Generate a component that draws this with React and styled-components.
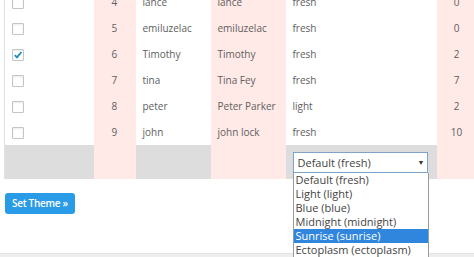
import React from 'react'
import styled, { createGlobalStyle } from 'styled-components'

const GlobalStyle = createGlobalStyle`
  html, body {
    margin: 0;
    padding: 0;
    background: #ffffff;
  }
  body {
    font-family: "Open Sans", "Liberation Sans", sans-serif;
    color: #555555;
  }
`

const Page = styled.div`
  width: 474px;
  height: 257px;
  overflow: hidden;
  display: flex;
  flex-direction: column;
  position: relative;
`

const Content = styled.div`
  flex: 1;
  padding-left: 4px;
  position: relative;
  z-index: 1;
`

const TableWrap = styled.div`
  width: 520px;
  margin-top: -11px;
`

const Table = styled.table`
  border-collapse: collapse;
  table-layout: fixed;
  border-left: 1px solid #e1e1e1;
  font-size: 10px;
`

const Cell = styled.td`
  height: 26px;
  padding: 0 7px;
  box-sizing: border-box;
  vertical-align: middle;
  text-align: ${(props) => (props.$center ? 'center' : 'left')};
  background: ${(props) => (props.$pink ? '#ffeae7' : '#ffffff')};
  white-space: nowrap;
  color: #606060;
`

const FootCell = styled(Cell)`
  height: 34px;
  background: ${(props) => (props.$pink ? '#ffeae7' : '#dddddd')};
`

const Check = styled.span`
  display: inline-block;
  box-sizing: border-box;
  width: 12px;
  height: 12px;
  border: 1px solid #c3c6c9;
  border-radius: 1px;
  background: #ffffff;
  box-shadow: inset 0 1px 2px rgba(0, 0, 0, 0.08);
  vertical-align: middle;
  position: relative;

  svg {
    position: absolute;
    left: 0px;
    top: 0px;
  }
`

const SelectWrap = styled.div`
  position: relative;
  width: 135px;
`

const SelectBox = styled.div`
  box-sizing: border-box;
  height: 21px;
  border: 1px solid #7ea3c6;
  background: #ffffff;
  display: flex;
  align-items: center;
  justify-content: space-between;
  padding: 0 2px 0 4px;
  font-size: 11px;
  color: #444444;
`

const Arrow = styled.span`
  font-size: 7px;
  color: #333333;
`

const List = styled.ul`
  position: absolute;
  top: 21px;
  left: 0;
  width: 136px;
  box-sizing: border-box;
  margin: 0;
  padding: 0;
  list-style: none;
  border: 1px solid #9a9a9a;
  border-top: none;
  background: #ffffff;
  z-index: 5;
`

const Option = styled.li`
  height: 14px;
  line-height: 14px;
  padding: 0 2px;
  font-size: 11px;
  color: ${(props) => (props.$active ? '#ffffff' : '#444444')};
  background: ${(props) => (props.$active ? '#2f86dc' : 'transparent')};
  white-space: nowrap;
`

const ButtonRow = styled.div`
  padding-top: 11px;
  padding-left: 1px;
`

const Button = styled.button`
  height: 21px;
  padding: 0 7px;
  border: none;
  border-radius: 3px;
  background: #2a9be6;
  color: #ffffff;
  font-family: "Open Sans", "Liberation Sans", sans-serif;
  font-size: 10px;
  font-weight: 600;
  letter-spacing: -0.3px;
`

const BottomBar = styled.div`
  height: 3px;
  background: #eeeeee;
  border-top: 1px solid #e4e4e4;
`

const rows = [
  { id: 4, user: 'lance', name: 'lance', theme: 'fresh', count: 0 },
  { id: 5, user: 'emiluzelac', name: 'emiluzelac', theme: 'fresh', count: 0 },
  { id: 6, user: 'Timothy', name: 'Timothy', theme: 'fresh', count: 2, checked: true },
  { id: 7, user: 'tina', name: 'Tina Fey', theme: 'fresh', count: 7 },
  { id: 8, user: 'peter', name: 'Peter Parker', theme: 'light', count: 2 },
  { id: 9, user: 'john', name: 'john lock', theme: 'fresh', count: 10 },
]

const themes = [
  'Default (fresh)',
  'Light (light)',
  'Blue (blue)',
  'Midnight (midnight)',
  'Sunrise (sunrise)',
  'Ectoplasm (ectoplasm)',
]

const Checkbox = ({ checked }) => (
  <Check>
    {checked && (
      <svg width="10" height="10" viewBox="0 0 10 10">
        <path d="M1.8 5.2 L4 7.4 L8.4 2" fill="none" stroke="#1e8cbe" strokeWidth="1.8" />
      </svg>
    )}
  </Check>
)

export default function App() {
  return (
    <Page>
      <GlobalStyle />
      <Content>
        <TableWrap>
          <Table>
            <colgroup>
              <col style={{ width: 89 }} />
              <col style={{ width: 42 }} />
              <col style={{ width: 75 }} />
              <col style={{ width: 75 }} />
              <col style={{ width: 151 }} />
              <col style={{ width: 40 }} />
            </colgroup>
            <tbody>
              {rows.map((r) => (
                <tr key={r.id}>
                  <Cell><Checkbox checked={r.checked} /></Cell>
                  <Cell $pink $center>{r.id}</Cell>
                  <Cell>{r.user}</Cell>
                  <Cell $pink>{r.name}</Cell>
                  <Cell>{r.theme}</Cell>
                  <Cell $pink $center>{r.count}</Cell>
                </tr>
              ))}
              <tr>
                <FootCell />
                <FootCell $pink />
                <FootCell />
                <FootCell $pink />
                <FootCell>
                  <SelectWrap>
                    <SelectBox>
                      Default (fresh)
                      <Arrow>▼</Arrow>
                    </SelectBox>
                    <List>
                      {themes.map((t) => (
                        <Option key={t} $active={t === 'Sunrise (sunrise)'}>{t}</Option>
                      ))}
                    </List>
                  </SelectWrap>
                </FootCell>
                <FootCell $pink />
              </tr>
            </tbody>
          </Table>
        </TableWrap>
        <ButtonRow>
          <Button>Set Theme »</Button>
        </ButtonRow>
      </Content>
      <BottomBar />
    </Page>
  )
}
